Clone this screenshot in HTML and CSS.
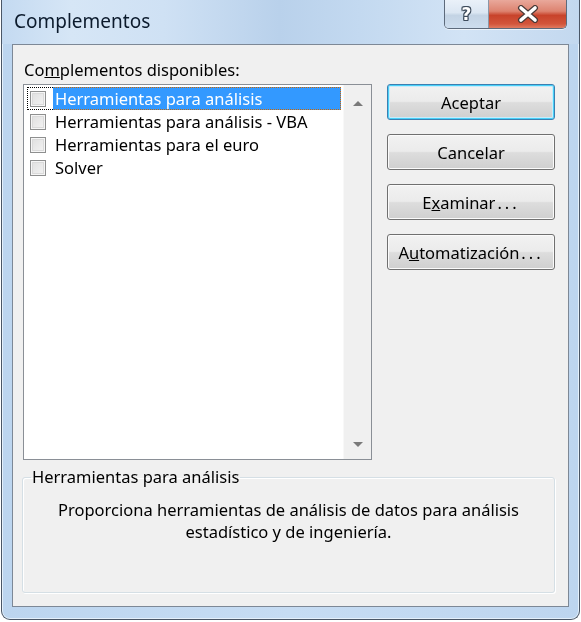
FILE: index.html
```html
<!DOCTYPE html>
<html lang="es">
<head>
<meta charset="utf-8">
<title>Complementos</title>
<link rel="stylesheet" href="styles.css">
</head>
<body>
<div class="window">
  <div class="titlebar">
    <span class="title">Complementos</span>
    <div class="caption-btns">
      <div class="cap-btn help"><span class="qmark">?</span></div>
      <div class="cap-btn close">
        <svg width="24" height="18" viewBox="0 0 24 18">
          <path d="M5 3 L19 15 M19 3 L5 15" stroke="#4a3a38" stroke-width="6" stroke-linecap="round"/>
          <path d="M5 3 L19 15 M19 3 L5 15" stroke="#ffffff" stroke-width="3.6" stroke-linecap="round"/>
        </svg>
      </div>
    </div>
  </div>
  <div class="client">
    <div class="avail-label">Co<u>m</u>plementos disponibles:</div>
    <div class="main">
      <div class="listbox">
        <ul class="items">
          <li class="item selected focused"><span class="cb"></span><span class="txt">Herramientas para análisis</span></li>
          <li class="item"><span class="cb"></span><span class="txt">Herramientas para análisis - VBA</span></li>
          <li class="item"><span class="cb"></span><span class="txt">Herramientas para el euro</span></li>
          <li class="item"><span class="cb"></span><span class="txt">Solver</span></li>
        </ul>
        <div class="scrollbar">
          <span class="arrow up"></span>
          <span class="arrow down"></span>
        </div>
      </div>
      <div class="buttons">
        <button class="btn default">Aceptar</button>
        <button class="btn">Cancelar</button>
        <button class="btn">E<u>x</u>aminar<span class="dots">...</span></button>
        <button class="btn">A<u>u</u>tomatización<span class="dots">...</span></button>
      </div>
    </div>
    <fieldset class="group">
      <legend>Herramientas para análisis</legend>
      <p class="desc">Proporciona herramientas de análisis de datos para análisis<br>estadístico y de ingeniería.</p>
    </fieldset>
  </div>
</div>
</body>
</html>
```
FILE: styles.css
```css
* { box-sizing: border-box; }
html, body { margin: 0; padding: 0; background: #ffffff; }
body {
  width: 581px;
  height: 622px;
  overflow: hidden;
  font-family: "Noto Sans", "Open Sans", sans-serif;
  font-size: 16.5px;
  color: #000;
}
.window {
  margin-left: 1px;
  width: 579px;
  height: 620px;
  border: 1px solid #4a5666;
  border-top: none;
  border-radius: 0 0 9px 9px;
  padding: 0 10px 12px 10px;
  background: linear-gradient(90deg, #bcd5ef 0%, #c6dcf3 50%, #bdd5ef 100%);
  box-shadow: inset 1px 0 0 #e4f0fb, inset -1px 0 0 #e4f0fb, inset 0 -1px 0 #e4f0fb;
  display: flex;
  flex-direction: column;
}
.titlebar {
  height: 44px;
  margin: 0 -10px;
  padding: 0 12px 0 12px;
  display: flex;
  justify-content: space-between;
  align-items: flex-start;
  background: linear-gradient(90deg, #c4daf1 0%, #d6e6f6 12%, #cfe1f4 28%, #b9d1eb 48%, #c3d9f0 62%, #d2e3f5 80%, #c3d8ef 100%);
}
.title {
  font-size: 19px;
  line-height: 24px;
  padding-top: 9px;
  color: #0b1a2c;
}
.caption-btns {
  display: flex;
  height: 29px;
  border: 1px solid #5d6a7b;
  border-top: none;
  border-radius: 0 0 5px 5px;
  overflow: hidden;
  box-shadow: 0 1px 0 rgba(255,255,255,0.6);
}
.cap-btn {
  height: 28px;
  display: flex;
  align-items: center;
  justify-content: center;
}
.help {
  width: 44px;
  background: linear-gradient(180deg, #eaf1f9 0%, #dbe6f2 45%, #c3d3e4 55%, #cdddee 100%);
  border-right: 1px solid #8a97a7;
}
.qmark {
  font-family: "DejaVu Sans", sans-serif;
  font-weight: bold;
  font-size: 17px;
  line-height: 1;
  color: #ffffff;
  text-shadow: 1px 0 0 #3e4c5c, -1px 0 0 #3e4c5c, 0 1px 0 #3e4c5c, 0 -1px 0 #3e4c5c, 1px 1px 0 #3e4c5c, -1px -1px 0 #3e4c5c, 1px -1px 0 #3e4c5c, -1px 1px 0 #3e4c5c;
}
.close {
  width: 77px;
  background: linear-gradient(180deg, #e9a89b 0%, #dd8370 40%, #c8432b 55%, #d2553b 85%, #e07a5f 100%);
}
.client {
  flex: 1;
  border: 1px solid #7d8896;
  background: #f0f0f0;
  display: flex;
  flex-direction: column;
  padding: 0 12px 0 9px;
}
.avail-label {
  padding: 15px 0 0 2px;
  line-height: 20px;
}
.main {
  margin-top: 4px;
  display: flex;
  align-items: flex-start;
}
.listbox {
  margin-left: 1px;
  width: 349px;
  height: 376px;
  border: 1px solid #8a8f96;
  background: #ffffff;
  display: flex;
}
.items {
  list-style: none;
  margin: 0;
  padding: 2px 2px 0 3px;
  flex: 1;
}
.item {
  position: relative;
  height: 23px;
  display: flex;
  align-items: center;
}
.cb {
  width: 16px;
  height: 16px;
  margin-left: 3px;
  margin-right: 7px;
  border: 1px solid #8e8f8f;
  background: linear-gradient(135deg, #dedede 0%, #f4f4f4 100%);
  box-shadow: inset 0 0 0 1px #f6f6f6, inset 0 0 0 2px #dadada;
}
.txt {
  flex: 1;
  height: 23px;
  line-height: 23px;
  padding-left: 2px;
  white-space: nowrap;
}
.selected .txt {
  background: #3399ff;
  color: #ffffff;
}
.focused::after {
  content: "";
  position: absolute;
  inset: 0;
  border: 1px dotted #ffffff;
  mix-blend-mode: difference;
  pointer-events: none;
}
.scrollbar {
  width: 28px;
  background: #f0f0f0;
  border-left: 1px solid #f8f8f8;
  display: flex;
  flex-direction: column;
  justify-content: space-between;
  align-items: center;
  padding: 16px 0 12px 0;
}
.arrow {
  width: 0;
  height: 0;
  border-left: 5px solid transparent;
  border-right: 5px solid transparent;
}
.arrow.up { border-bottom: 5px solid #7a7a7a; }
.arrow.down { border-top: 5px solid #7a7a7a; }
.buttons {
  margin-left: 15px;
  width: 168px;
  display: flex;
  flex-direction: column;
  gap: 14px;
}
.btn {
  height: 36px;
  width: 168px;
  font-family: inherit;
  font-size: 16.5px;
  color: #000;
  border: 1px solid #707070;
  border-radius: 3px;
  background: linear-gradient(180deg, #f2f2f2 0%, #ebebeb 48%, #dddddd 52%, #cfcfcf 100%);
  box-shadow: inset 0 0 0 1px #fbfbfb;
  padding: 0;
}
.btn.default {
  border-color: #3c7fb1;
  box-shadow: inset 0 0 0 1px #48d0f8, inset 0 0 0 2px #c8ecfb;
}
.dots {
  letter-spacing: 3px;
  margin-left: 2px;
}
.group {
  margin: 7px 0 0 0;
  width: 533px;
  height: 126px;
  padding: 0;
  border: 1px solid #d5dfe5;
  border-radius: 3px;
  box-shadow: inset 1px 1px 0 #ffffff, 1px 1px 0 #ffffff;
}
.group legend {
  margin-left: 8px;
  padding: 0 1px;
  line-height: 20px;
}
.desc {
  margin: 0;
  padding-top: 12px;
  text-align: center;
  line-height: 22px;
}
```
